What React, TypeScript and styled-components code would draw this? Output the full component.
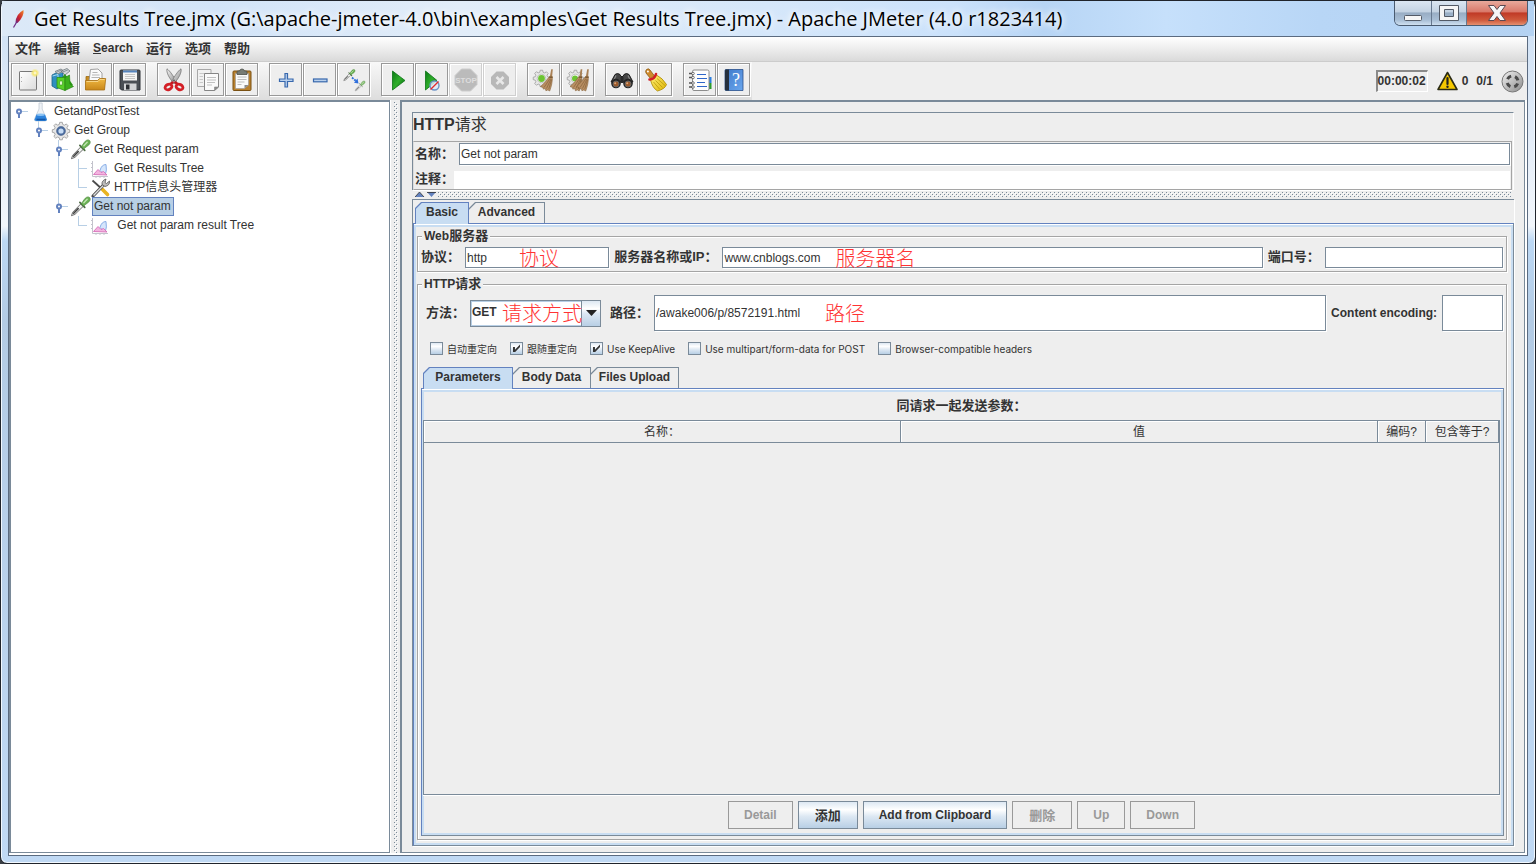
import React, { useState } from 'react';
import styled, { createGlobalStyle, css } from 'styled-components';

const c = {
  line: '#7a8a99',
  blueLine: '#6382bf',
  paleBlue: '#c8ddf2',
  face: '#eeeeee',
  grey: '#999999',
  text: '#333333',
  tree: '#b8cfe5',
  note: '#ff3333',
};

const GlobalStyle = createGlobalStyle`
  * { box-sizing: border-box; }
  body { margin: 0; background: #3a3f45; }
  body, button, input, select {
    font-family: "Liberation Sans", "Noto Sans CJK SC", sans-serif;
    font-size: 12px;
    color: ${c.text};
  }
`;

/* ---------- window frame ---------- */

const Frame = styled.div`
  min-height: 100vh;
  display: flex;
  flex-direction: column;
  padding: 0 7px 7px;
  border: 1px solid #20242b;
  border-radius: 7px;
  box-shadow: inset 0 0 0 1px #f2f8fe;
  background: linear-gradient(180deg, #b9cfe8 0, #d2e3f6 36px, #e4edf8 140px, #f2f6fb 225px, #bcd8f4 240px, #b3cbe4 320px, #c0d9f4 100%);
`;

const TitleBar = styled.header`
  display: flex;
  align-items: center;
  gap: 6px;
  height: 35px;
  margin: 0 -6px;
  padding: 0 6px 0 10px;
  background: linear-gradient(90deg, #dce9f7 0, #d2e4f8 14%, #e2edf9 30%, #d5e7fa 50%, #cbe2fb 62%, #b7d5f5 68%, #c6e0fb 76%, #b8d6f6 86%, #b4d2f2 100%);
`;

const Title = styled.h1`
  flex: 1;
  margin: 0;
  font: 400 20px/28px "Open Sans", "Noto Sans", sans-serif;
  color: #000;
  white-space: nowrap;
  text-shadow: 0 0 6px #fff, 0 0 10px #fff;
`;

const WindowControls = styled.div`
  display: flex;
  align-self: flex-start;
  height: 25px;
  border: 1px solid #4a5b70;
  border-top: 0;
  border-radius: 0 0 6px 6px;
  overflow: hidden;
`;

const ControlButton = styled.button<{ $w: number; $close?: boolean }>`
  width: ${p => p.$w}px;
  padding: 0;
  border: 0;
  border-left: 1px solid #66788f;
  display: flex;
  align-items: center;
  justify-content: center;
  background: ${p => p.$close
    ? 'linear-gradient(180deg, #e9a99b 0, #d9796a 45%, #c03a26 50%, #cf5a3c 80%, #e59070 100%)'
    : 'linear-gradient(180deg, #dbe6f2 0, #c3d2e2 45%, #98adc4 50%, #a9bfd6 80%, #cfe0f0 100%)'};
  &:first-child { border-left: 0; }
`;

const Client = styled.div`
  flex: 1;
  display: flex;
  flex-direction: column;
  border: 1px solid #5b6b80;
  background: ${c.face};
`;

/* ---------- menu and tool bar ---------- */

const MenuBar = styled.nav`
  display: flex;
  align-items: center;
  gap: 13px;
  height: 25px;
  padding: 0 6px 3px;
  background: linear-gradient(180deg, #ffffff 0, #dadada 100%);
  border-bottom: 1px solid #cccccc;
`;

const MenuItem = styled.button`
  padding: 0;
  border: 0;
  background: none;
  font-weight: 700;
  &:lang(zh) { font-size: 13px; }
`;

const ToolRow = styled.div`
  display: flex;
  align-items: center;
  justify-content: space-between;
  height: 38px;
`;

const ToolBar = styled.div`
  display: flex;
  gap: 11px;
  height: 38px;
  padding: 1px 2px 0;
  background: linear-gradient(180deg, #f8f8f8 0, #dddddd 100%);
`;

const ToolGroup = styled.div`
  display: flex;
  gap: 1px;
`;

const ToolButton = styled.button`
  width: 33px;
  height: 33px;
  padding: 0;
  display: flex;
  align-items: center;
  justify-content: center;
  border: 1px solid ${c.grey};
  background: ${c.face};
  box-shadow: 1px 1px 0 #fff, inset 1px 1px 0 #fff;
  &:disabled { border-color: #cfcfcf; }
`;

const Status = styled.div`
  display: flex;
  align-items: center;
  padding-right: 3px;
  font-weight: 700;
`;

const Clock = styled.output`
  height: 22px;
  padding: 0 1px 0 0;
  line-height: 19px;
  border: 1px solid #fff;
  border-top: 2px solid #8a8a8a;
  border-left: 2px solid #8a8a8a;
  margin-right: 9px;
`;

const Count = styled.span`
  margin: 0 8px 0 4px;
  & + & { margin-left: 0; }
`;

/* ---------- body split ---------- */

const Body = styled.div`
  flex: 1;
  display: grid;
  grid-template-columns: 382px 9px minmax(0, 1fr);
  padding: 0 2px 2px 0;
  background: #fff;
`;

const Pane = styled.section`
  border: 2px solid ${c.line};
  border-right-width: 1px;
  border-bottom-width: 1px;
`;

const TreePane = styled(Pane)`
  margin-right: 1px;
  background: #fff;
`;

const dots = css`
  background-color: ${c.face};
  background-image:
    conic-gradient(at 1px 1px, transparent 75%, ${c.line} 75%),
    conic-gradient(at 1px 1px, transparent 75%, ${c.line} 75%),
    conic-gradient(at 1px 1px, transparent 75%, #fff 75%),
    conic-gradient(at 1px 1px, transparent 75%, #fff 75%);
  background-size: 4px 4px;
  background-position: 0 0, 2px 2px, 1px 1px, 3px 3px;
`;

const VerticalDivider = styled.div`
  padding: 2px 2px 0 3px;
  background: ${c.face};
  &::before { content: ''; display: block; height: 100%; ${dots} }
`;

const EditorPane = styled(Pane)`
  display: flex;
  flex-direction: column;
  padding: 10px 10px 6px;
  background: ${c.face};
`;

/* ---------- tree ---------- */

const Tree = styled.ul`
  list-style: none;
  margin: 0;
  padding: 0;
`;

const TreeRow = styled.li`
  display: flex;
  height: 19px;
`;

const IconSlot = styled.span`
  width: 21px;
  height: 19px;
  svg { display: block; overflow: visible; }
`;

const NodeLabel = styled.button<{ $selected: boolean }>`
  height: 19px;
  padding: 0 2px 0 1px;
  line-height: 17px;
  white-space: pre;
  border: 1px solid ${p => (p.$selected ? c.blueLine : 'transparent')};
  background: ${p => (p.$selected ? c.tree : 'transparent')};
`;

/* ---------- editor ---------- */

const HeaderBox = styled.div`
  border-top: 1px solid ${c.line};
  border-left: 1px solid ${c.line};
  border-right: 1px solid #fff;
`;

const PageTitle = styled.h2`
  margin: 0;
  height: 28px;
  font-size: 16px;
  line-height: 24px;
  font-weight: 700;
  span { font-weight: 400; }
`;

const NameBox = styled.div`
  display: flex;
  flex-direction: column;
  gap: 5px;
  margin-right: 1px;
  padding: 1px 1px 0;
  border: 1px solid #a5a5a5;
  border-left-color: #dddddd;
  box-shadow: 0 1px 0 #fff;
`;

const FieldRow = styled.div<{ $gap: number }>`
  display: flex;
  align-items: center;
  gap: ${p => p.$gap}px;
`;

const Label = styled.label`
  font-weight: 700;
  white-space: nowrap;
  &:lang(zh) { font-size: 13px; line-height: 18px; padding-bottom: 1px; }
`;

const TextInput = styled.input<{ $h: number; $plain?: boolean }>`
  display: block;
  width: 100%;
  min-width: 0;
  height: ${p => p.$h}px;
  padding: 0 1px;
  border: ${p => (p.$plain ? '0' : `1px solid ${c.line}`)};
  border-radius: 0;
  background: #fff;
  outline: 0;
  box-shadow: ${p => (p.$plain ? 'none' : '1px 1px 0 #fff')};
`;

const Field = styled.div<{ $grow: number }>`
  position: relative;
  flex: ${p => p.$grow} 1 0;
  min-width: 0;
`;

const Note = styled.span<{ $left: number }>`
  position: absolute;
  top: 50%;
  left: ${p => p.$left}px;
  margin-top: -14px;
  font: 300 20px/28px "Noto Sans CJK SC", sans-serif;
  color: ${c.note};
  white-space: nowrap;
  pointer-events: none;
`;

const Splitter = styled.div`
  display: flex;
  align-items: center;
  gap: 1px;
  height: 9px;
  padding: 0 3px;
  &::after { content: ''; flex: 1; height: 5px; ${dots} }
`;

const TabbedBox = styled.div`
  flex: 1;
  display: flex;
  flex-direction: column;
  padding-top: 2px;
  border-top: 1px solid ${c.line};
  border-left: 1px solid ${c.line};
  box-shadow: 1px 1px 0 #fff;
`;

const Tabs = styled.div`
  display: flex;
  padding-left: 2px;
`;

const Tab = styled.button<{ $w: number; $active?: boolean }>`
  position: relative;
  width: ${p => p.$w}px;
  height: ${p => (p.$active ? 22 : 21)}px;
  margin-bottom: ${p => (p.$active ? -1 : 0)}px;
  padding: 0 0 ${p => (p.$active ? 3 : 2)}px;
  font-weight: 700;
  border: 1px solid ${p => (p.$active ? c.blueLine : c.line)};
  border-bottom: 0;
  border-left-width: ${p => (p.$active ? 1 : 0)}px;
  background: ${p => css`linear-gradient(135deg, ${p.$active ? c.blueLine : c.line} 5px, ${p.$active ? c.paleBlue : c.face} 6px)`} border-box;
  clip-path: polygon(6px 0, 100% 0, 100% 100%, 0 100%, 0 6px);
  z-index: ${p => (p.$active ? 1 : 0)};
`;

const TabPage = styled.div<{ $pad: string }>`
  flex: 1;
  display: flex;
  flex-direction: column;
  padding: ${p => p.$pad};
  border: 1px solid ${c.blueLine};
  border-right-color: ${c.line};
  border-bottom-color: ${c.line};
  box-shadow: inset 0 1px 0 #fff, inset 0 3px 0 ${c.paleBlue}, inset 0 0 0 2px ${c.paleBlue};
`;

const Group = styled.fieldset<{ $fill?: boolean }>`
  ${p => p.$fill && css`flex: 1; display: flex; flex-direction: column;`}
  min-width: 0;
  margin: 0;
  padding: 3px 2px 3px 3px;
  border: 1px solid #a5a5a5;
  box-shadow: 1px 1px 0 #fff, inset 1px 1px 0 #fff;
  & + & { margin-top: 4px; }
  > ${FieldRow} { padding-right: 1px; }
`;

const Legend = styled.legend`
  margin-left: 1px;
  padding: 0 2px;
  height: 16px;
  font-weight: 700;
  line-height: 16px;
  background: ${c.face};
  span { font-size: 13px; }
`;

const Combo = styled.div`
  position: relative;
  width: 131px;
  margin-right: 4px;
`;

const Select = styled.select`
  appearance: none;
  display: block;
  width: 100%;
  height: 27px;
  padding: 0 22px 2px 1px;
  font-weight: 700;
  border: 1px solid ${c.line};
  border-radius: 0;
  background: #fff;
  box-shadow: inset 0 0 0 1px ${c.tree};
`;

const ComboArrow = styled.span`
  position: absolute;
  top: 0;
  right: 0;
  bottom: 0;
  width: 20px;
  display: flex;
  align-items: center;
  justify-content: center;
  border: 1px solid ${c.line};
  background: linear-gradient(180deg, #dde8f3 0, #ffffff 30%, #dde8f3 50%, #b8cfe5 100%);
  pointer-events: none;
`;

const CheckRow = styled.div`
  display: flex;
  align-items: center;
  gap: 13px;
  height: 36px;
  padding: 0 0 1px 9px;
`;

const CheckLabel = styled.label`
  display: flex;
  align-items: center;
  gap: 4px;
  font: 400 10px/14px Inter, "Noto Sans CJK SC", sans-serif;
  white-space: nowrap;
`;

const CheckInput = styled.input`
  appearance: none;
  width: 13px;
  height: 13px;
  margin: 0;
  border: 1px solid ${c.line};
  background: linear-gradient(180deg, #dde8f3 0, #ffffff 30%, #dde8f3 60%, #b8cfe5 100%);
  &:checked::before {
    content: '';
    display: block;
    width: 11px;
    height: 11px;
    background: ${c.text};
    clip-path: polygon(18% 36%, 36% 36%, 36% 62%, 82% 14%, 82% 36%, 38% 82%, 18% 82%);
  }
`;

const TableCaption = styled.h3`
  margin: 0;
  height: 28px;
  font-size: 13px;
  line-height: 28px;
  text-align: center;
`;

const TableArea = styled.div`
  flex: 1;
  border: 1px solid ${c.line};
  box-shadow: 0 1px 0 #fff;
`;

const ParamTable = styled.table`
  width: 100%;
  table-layout: fixed;
  border-collapse: separate;
  border-spacing: 0;
`;

const HeadCell = styled.th<{ $w?: number }>`
  ${p => p.$w && css`width: ${p.$w}px;`}
  height: 22px;
  padding: 0;
  font-size: 12px;
  font-weight: 400;
  line-height: 20px;
  white-space: nowrap;
  border-right: 1px solid ${c.line};
  border-bottom: 1px solid ${c.line};
  box-shadow: inset 1px 1px 0 #fff;
`;

const ButtonBar = styled.div`
  display: flex;
  justify-content: center;
  gap: 5px;
  padding: 6px 0 4px;
`;

const PushButton = styled.button`
  height: 28px;
  padding: 0 15px 1px;
  font-weight: 700;
  border: 1px solid ${c.line};
  background: linear-gradient(180deg, #dde8f3 0, #ffffff 30%, #dde8f3 55%, #b8cfe5 100%);
  &:lang(zh) { font-size: 13px; padding: 0 16px 2px; }
  &:disabled { color: ${c.grey}; border-color: ${c.grey}; background: ${c.face}; }
`;

/* ---------- drawings ---------- */

const Defs = () => (
  <svg width="0" height="0" style={{ position: 'absolute' }} aria-hidden="true">
    <defs>
      <linearGradient id="paper" x1="0" y1="0" x2="1" y2="1"><stop offset="0" stopColor="#fff" /><stop offset="1" stopColor="#dcdcdc" /></linearGradient>
      <linearGradient id="green" x1="0" y1="0" x2="1" y2="1"><stop offset="0" stopColor="#0b7a16" /><stop offset=".5" stopColor="#2fae2b" /><stop offset="1" stopColor="#04600c" /></linearGradient>
      <linearGradient id="gold" x1="0" y1="0" x2="0" y2="1"><stop offset="0" stopColor="#f0b943" /><stop offset="1" stopColor="#c8871a" /></linearGradient>
      <linearGradient id="yellow" x1="0" y1="0" x2="1" y2="1"><stop offset="0" stopColor="#fff27a" /><stop offset="1" stopColor="#e0b400" /></linearGradient>
      <linearGradient id="steel" x1="0" y1="0" x2="1" y2="1"><stop offset="0" stopColor="#f4f4f4" /><stop offset="1" stopColor="#8a8a8a" /></linearGradient>
      <linearGradient id="book" x1="0" y1="0" x2="1" y2="1"><stop offset="0" stopColor="#3f78c9" /><stop offset="1" stopColor="#6aa7ee" /></linearGradient>
      <radialGradient id="glow"><stop offset="0" stopColor="#fffef0" /><stop offset=".45" stopColor="#f6e770" /><stop offset="1" stopColor="#f6e770" stopOpacity="0" /></radialGradient>
      <linearGradient id="feather" x1="0" y1="1" x2="1" y2="0"><stop offset="0" stopColor="#6b2a83" /><stop offset=".4" stopColor="#c8202f" /><stop offset="1" stopColor="#f08a2a" /></linearGradient>
    </defs>
  </svg>
);

const Svg = ({ children, size = 24 }: { children: React.ReactNode; size?: number }) => (
  <svg width={size} height={size} viewBox="0 0 24 24" fill="none" aria-hidden="true">{children}</svg>
);

const Dropper = () => (
  <>
    <path d="M1.500 22.500 3 18.500 12.200 9l2.800 2.800L5.500 21z" fill="#f2f4f2" stroke="#5c5c5c" strokeWidth="1" />
    <path d="M3.500 20.200 9.800 13.800" stroke="#3f3f3f" strokeWidth="1.800" />
    <path d="M11.200 7.200 16.800 12.800" stroke="#4d6a44" strokeWidth="2" strokeLinecap="round" />
    <path d="M12.600 8.600c1.600-1.200 2.600-4 4.800-6.200 1.800-1.800 3.900-1.900 5-.8 1.100 1.200 1 3.200-.8 5-2 2-4.800 3.200-6 4.900z" fill="#6ab153" stroke="#437f33" strokeWidth=".7" />
    <path d="M15.800 7.600 19.600 3.600" stroke="#c2e6b2" strokeWidth="1.500" strokeLinecap="round" />
  </>
);

const GearShape = () => (
  <>
    <path d="M10 1.500h3l.5 2.500 1.900.8 2.200-1.400 2.100 2.100-1.400 2.200.8 1.900 2.400.5v3l-2.400.5-.8 1.900 1.400 2.200-2.100 2.100-2.200-1.400-1.900.8-.5 2.400h-3l-.5-2.400-1.900-.8-2.200 1.400-2.100-2.100 1.400-2.200-.8-1.900L1.500 13v-3l2.400-.5.8-1.900-1.400-2.200 2.100-2.100 2.200 1.400L9.500 4z" fill="#e6e6e6" stroke="#9d9d9d" />
    <circle cx="11.500" cy="11.500" r="5.200" fill="#f8f8f8" stroke="#b5b5b5" />
  </>
);

const Bristles = ({ x }: { x: number }) => (
  <g transform={`translate(${x} 0)`}>
    <path d="M18.200 1.200h1.600L19 10h-2.400z" fill="#a98156" />
    <path d="M16.400 8.500C14 11.500 11.500 15.500 7.500 18.500l2.500 1 .3 1.600 2-.6.6 2.200 2-.8 1.800 1.100c1.700-4.500 2.900-9.500 2.600-14.500z" fill="#b98f63" stroke="#86633b" strokeWidth=".6" />
    <path d="M17 10.500 11 19.500M18 11 13.500 20.500M18.600 11.500 15.800 21" stroke="#86633b" strokeWidth=".7" />
    <path d="M16.200 9.300h3.400" stroke="#6f4f2a" />
  </g>
);

const icons = {
  new: (
    <Svg>
      <rect x="3.500" y="3.500" width="17" height="18.500" rx=".6" fill="url(#paper)" stroke="#777" />
      <path d="M5.500 9v1M5.500 13v1" stroke="#aaa" />
      <circle cx="19" cy="5" r="4.500" fill="url(#glow)" />
    </Svg>
  ),
  templates: (
    <Svg>
      <path d="M2 7 10 3l3 2v12l-6 4-5-3z" fill="#2f8fc0" stroke="#1d6287" strokeWidth=".8" />
      <path d="M5 3.500 11 1l2 1.500L8 6zM11 3l6-2.500L20 3l-5 4z" fill="#cfd5d8" stroke="#70797d" strokeWidth=".8" />
      <path d="M6 4.500 11 2.200M13 4l5-2.200M9 5.500l5-2" stroke="#8d979c" />
      <path d="M2.500 8 8 6.500v12" stroke="#a8dcf3" />
      <path d="M12 9.500 15 6l8 11-8 5z" fill="#2b9a18" />
      <path d="M7 9.500h8V22.500l-8-3z" fill="#59d02a" stroke="#2f8f17" strokeWidth=".8" />
      <path d="M15 9.500 19.500 7l.5 9 3.500 2.500-8.500 4z" fill="#3bb01d" stroke="#23780f" strokeWidth=".6" />
      <rect x="9.500" y="13" width="3" height="4" rx=".8" fill="#dff8cf" stroke="#2f8f17" strokeWidth=".6" />
    </Svg>
  ),
  open: (
    <Svg>
      <path d="M2 8.500h6l1 2h11v11H2z" fill="#c98d22" stroke="#9b6b13" strokeWidth=".8" />
      <path d="M5 13 6.500 1.500 14 1l4 4L18 13z" fill="#fafafa" stroke="#8b8b8b" strokeWidth=".8" />
      <path d="M8.500 4.500h5M8 7h7.500M7.500 9.500h8.500" stroke="#b5b5b5" />
      <path d="M1.500 22V12.500h12l2-2h6.200L20.500 22z" fill="url(#gold)" stroke="#a87118" strokeWidth=".8" />
      <path d="M2.500 13.500h11.500l2-2h4.500" stroke="#fbe09a" strokeWidth=".8" />
    </Svg>
  ),
  save: (
    <Svg>
      <path d="M2 3q0-1 1-1h18q1 0 1 1v19H3.500L2 20.500z" fill="#4a4f55" stroke="#2f3338" />
      <rect x="5" y="2.500" width="14" height="10" fill="#f4f4f4" />
      <rect x="5" y="2.500" width="14" height="2" fill="#5584bd" />
      <path d="M7 6.500h10M7 8.500h10M7 10.500h10" stroke="#c4c4c4" />
      <rect x="6" y="15.500" width="12.500" height="6.500" fill="#d2d4d6" />
      <rect x="8" y="16.500" width="3.500" height="5" fill="#2b2e33" />
    </Svg>
  ),
  cut: (
    <Svg>
      <path d="M5 .8C4 4 7.500 11.500 12.500 15.500l1.800-1.800C11.500 8 8 3 5 .8z" fill="url(#steel)" stroke="#777" strokeWidth=".8" />
      <path d="M19 .8c1 3.200-2.500 10.700-7.500 14.700l-1.800-1.800C12.500 8 16 3 19 .8z" fill="url(#steel)" stroke="#777" strokeWidth=".8" />
      <circle cx="12" cy="12.500" r=".9" fill="#555" />
      <path d="M10.500 14.500 8.500 16M13.500 14.500l2 1.500" stroke="#c3161c" strokeWidth="2.600" strokeLinecap="round" />
      <ellipse cx="6.500" cy="19" rx="3.600" ry="2.600" stroke="#d31f26" strokeWidth="2.800" transform="rotate(-25 6.500 19)" />
      <ellipse cx="17.500" cy="19" rx="3.600" ry="2.600" stroke="#d31f26" strokeWidth="2.800" transform="rotate(25 17.500 19)" />
    </Svg>
  ),
  copy: (
    <Svg>
      <path d="M1.500 1.500H15v17H1.500z" fill="#f1f1f1" stroke="#a8a8a8" />
      <path d="M3.500 5.500H9M3.500 8.500H7M3.500 11.500H7M3.500 14.500H7" stroke="#c9c9c9" />
      <path d="M8.500 5.500h14V19l-4 3.500h-10z" fill="#fafafa" stroke="#858585" />
      <path d="M11 9.500h9M11 12h9M11 14.500h8M11 17h5" stroke="#c0c0c0" />
      <path d="M22.500 19h-4v3.500z" fill="#8a8a8a" stroke="#858585" strokeWidth=".6" />
    </Svg>
  ),
  paste: (
    <Svg>
      <rect x="3" y="3" width="18" height="19.500" rx="1" fill="#b9812f" stroke="#7a5113" />
      <path d="M5.500 5.500h13V17l-4 3.500h-9z" fill="#fafafa" stroke="#9a9a9a" strokeWidth=".6" />
      <path d="M7.500 9h9M7.500 11.500h9M7.500 14h7M7.500 16.500h4" stroke="#bcbcbc" />
      <path d="M18.500 17h-4v3.500z" fill="#8a8a8a" />
      <path d="M7 6.500V4q0-1 1-1h1.500Q10 1 12 1t2.500 2H16q1 0 1 1v2.500z" fill="#777b74" stroke="#4c4f49" strokeWidth=".8" />
    </Svg>
  ),
  plus: (
    <Svg><path d="M11 5.500h2.500V11H19v2.500h-5.500V19H11v-5.500H5.500V11H11z" fill="#b9d0ec" stroke="#3868ad" strokeWidth="1.200" /></Svg>
  ),
  minus: (
    <Svg><rect x="5.500" y="11" width="13.500" height="2.800" fill="#b9d0ec" stroke="#3868ad" strokeWidth="1.200" /></Svg>
  ),
  toggle: (
    <Svg>
      <g transform="translate(1 1) scale(.52)"><Dropper /></g>
      <g transform="translate(12.500 12.500) scale(.46)" opacity=".8"><Dropper /></g>
      <path d="M10 9.500 14 13" stroke="#2f6fdc" strokeWidth="1.800" strokeDasharray="2 1" />
      <path d="M12 14.800 16.500 15.500 15.500 10.500z" fill="#2f6fdc" />
    </Svg>
  ),
  start: (
    <Svg><path d="M6.500 3 19 12.500 6.500 22z" fill="url(#green)" stroke="#0a7314" strokeWidth=".8" /></Svg>
  ),
  startNoPause: (
    <Svg>
      <path d="M5.500 3 17 12.500 5.500 22z" fill="url(#green)" stroke="#0a7314" strokeWidth=".8" />
      <circle cx="14.500" cy="17.500" r="4.500" fill="#dfe9f7" fillOpacity=".85" stroke="#6d93c6" strokeWidth="1.400" />
      <path d="m10.500 21.500 8-8" stroke="#e22b2b" strokeWidth="1.300" />
    </Svg>
  ),
  stop: (
    <Svg>
      <path d="M7.500 1h9L23 7.500v9L16.500 23h-9L1 16.500v-9z" fill="#bbbbbb" stroke="#cccccc" />
      <text x="12" y="15" textAnchor="middle" fontSize="8" fontWeight="700" fill="#dedede" fontFamily="Liberation Sans">STOP</text>
    </Svg>
  ),
  shutdown: (
    <Svg>
      <path d="M8.500 3.500h7L21 9v7l-5.500 5.500h-7L3 16V9z" fill="#b8b8b8" />
      <path d="m8.500 9 7 7m0-7-7 7" stroke="#e8e8e8" strokeWidth="2.600" />
    </Svg>
  ),
  clear: (
    <Svg>
      <g transform="translate(0 1) scale(.82)"><GearShape /></g>
      <circle cx="9.500" cy="10.500" r="3.400" fill="#6cc433" />
      <Bristles x={1} />
    </Svg>
  ),
  clearAll: (
    <Svg>
      <g transform="translate(0 1) scale(.82)"><GearShape /></g>
      <circle cx="9" cy="10.500" r="3" fill="#6cc433" />
      <Bristles x={-3.5} />
      <Bristles x={3} />
    </Svg>
  ),
  search: (
    <Svg>
      <path d="M5 6.500q2.500-2 5 0l1 2h2l1-2q2.500-2 5 0L23 14H1z" fill="#454545" stroke="#1e1e1e" />
      <path d="M6 7.500 3.500 13M18 7.500l2.500 5.500" stroke="#8a8a8a" strokeWidth="1.200" />
      <rect x="10.500" y="9" width="3" height="6" fill="#2a2a2a" />
      <circle cx="6" cy="15.500" r="4.800" fill="#242424" />
      <circle cx="18" cy="15.500" r="4.800" fill="#242424" />
      <circle cx="6" cy="16" r="3" fill="#9b5a2c" stroke="#666" />
      <circle cx="18" cy="16" r="3" fill="#9b5a2c" stroke="#666" />
      <circle cx="5.200" cy="15.200" r="1" fill="#dca678" />
      <circle cx="17.200" cy="15.200" r="1" fill="#dca678" />
    </Svg>
  ),
  broom: (
    <Svg>
      <path d="M2.500 1.500q2-1.500 3.500.5l4.500 6-4 2.500L2 5q-1-2 .5-3.500z" fill="#cf8a2b" stroke="#8d5a12" strokeWidth=".8" />
      <circle cx="3.900" cy="3.500" r="1" fill="#fff" />
      <path d="M6.500 12q4.500-.5 6-5 6 3 10 9.500-1.500 4.500-9 6.500-5-3-7-11z" fill="url(#yellow)" stroke="#a98600" strokeWidth=".8" />
      <path d="m9.500 14 6 7M11.500 12.500l7 7M13 10.500l8 7" stroke="#b99a10" strokeWidth=".8" />
      <path d="M5.500 11.500q5 0 6.500-5.500" stroke="#d31f26" strokeWidth="2.600" strokeLinecap="round" />
    </Svg>
  ),
  list: (
    <Svg>
      <path d="M20 9h3.500v6H20z" fill="#2b7fe0" /><path d="M20 15h3.500v6H20z" fill="#2c9c2c" />
      <rect x="4.500" y="2" width="16.500" height="20.500" rx="1.500" fill="#fdfdfd" stroke="#8c8c8c" />
      <path d="M9 6.500h9M9 10.500h10M9 14.500h8M9 18.500h10" stroke="#2f66c9" strokeWidth="1.200" />
      <circle cx="5" cy="5.500" r="1.300" fill="#fff" stroke="#555" strokeWidth=".8" />
      <circle cx="5" cy="9.500" r="1.300" fill="#fff" stroke="#555" strokeWidth=".8" />
      <circle cx="5" cy="15" r="1.300" fill="#fff" stroke="#555" strokeWidth=".8" />
      <circle cx="5" cy="19" r="1.300" fill="#fff" stroke="#555" strokeWidth=".8" />
      <path d="M1 5.500h3M1 9.500h3M1 15h3M1 19h3" stroke="#555" strokeWidth="1.400" />
    </Svg>
  ),
  help: (
    <Svg>
      <path d="M3 2.500Q3 1.500 4 1.500h17v21H4q-1 0-1-1z" fill="url(#book)" stroke="#284f8c" strokeWidth=".8" />
      <path d="M3 2.500Q3 1.500 4 1.500h3v21H4q-1 0-1-1z" fill="#26303d" />
      <text x="14" y="18" textAnchor="middle" fontSize="18" fill="#fff" fontFamily="Liberation Serif">?</text>
    </Svg>
  ),
};

const treeIcons: Record<string, React.ReactNode> = {
  flask: (
    <svg width="20" height="20" viewBox="0 0 20 20" fill="none">
      <path d="M8 1h3.200v6l4.300 10q.5 2-1.500 2H5q-2 0-1.500-2L8 7z" fill="#eef2f6" stroke="#c3ccd6" strokeWidth=".8" />
      <path d="M5.500 12.500H14l1.800 4.800q.3 1.700-1.500 1.700H5.200q-2 0-1.500-1.700z" fill="#2f84dc" />
      <ellipse cx="9.700" cy="12.700" rx="4" ry="1.200" fill="#8cc3f4" />
      <path d="M5.500 17.500h9" stroke="#1357a8" strokeWidth="1.600" />
    </svg>
  ),
  gear: (
    <svg width="20" height="20" viewBox="0 0 23 23" fill="none">
      <GearShape />
      <circle cx="11.500" cy="11.500" r="4.200" fill="#c6dcf5" stroke="#4a6a9c" strokeWidth="2.400" />
    </svg>
  ),
  dropper: <svg width="20" height="20" viewBox="1 1 23 23" fill="none"><Dropper /></svg>,
  chart: (
    <svg width="20" height="20" viewBox="0 0 20 20" fill="none">
      <path d="M1.500 2v15.500H17" stroke="#c3c3cc" />
      <path d="M0 4.500h1.500M0 8.500h1.500M0 12.500h1.500M5 17.500V19M9 17.500V19M13 17.500V19" stroke="#c3c3cc" />
      <path d="M9 11.500q1.500-6 6-6 1 6-.500 9.500-3 0-5.500-3.500z" fill="#d5e6fc" stroke="#7fa6e3" strokeWidth=".9" />
      <path d="M2.500 15.500 7 10.500l3 3 2.500-1 3.500 3.500z" fill="#f3b4e0" stroke="#d66fb8" strokeWidth=".9" />
    </svg>
  ),
  tools: (
    <svg width="20" height="20" viewBox="0 0 20 20" fill="none">
      <path d="M1.500 2.500 11 11" stroke="#4b4b4b" strokeWidth="1.800" />
      <path d="m11.500 11.500 5 5" stroke="#e8b321" strokeWidth="3.600" strokeLinecap="round" />
      <path d="M2 18 13 6.500" stroke="#4b4b4b" strokeWidth="3.200" strokeLinecap="round" />
      <path d="M2.500 17.500 13 6.800" stroke="#dddddd" strokeWidth="1.400" />
      <path d="M11 6.500q-.5-4 4-5.500l-1 3.500 1.500 1L18.500 3q.5 4.500-4.500 5.500z" fill="#bcbcbc" stroke="#555" strokeWidth=".8" />
    </svg>
  ),
};

/* ---------- data ---------- */

type TreeItem = {
  text: string;
  depth: number;
  icon: string;
  handle?: boolean;
  full?: number[];
  half?: number[];
};

const tree: TreeItem[] = [
  { text: 'GetandPostTest', depth: 0, icon: 'flask', handle: true },
  { text: 'Get Group', depth: 1, icon: 'gear', handle: true, half: [27] },
  { text: 'Get Request param', depth: 2, icon: 'dropper', handle: true, full: [47] },
  { text: 'Get Results Tree', depth: 3, icon: 'chart', full: [47, 67] },
  { text: 'HTTP信息头管理器', depth: 3, icon: 'tools', full: [47], half: [67] },
  { text: 'Get not param', depth: 2, icon: 'dropper', handle: true, half: [47] },
  { text: ' Get not param result Tree', depth: 3, icon: 'chart', half: [67] },
];

type ToolDef = { name: keyof typeof icons; label: string; off?: boolean };

const toolGroups: ToolDef[][] = [
  [{ name: 'new', label: 'New' }, { name: 'templates', label: 'Templates' }, { name: 'open', label: 'Open' }, { name: 'save', label: 'Save' }],
  [{ name: 'cut', label: 'Cut' }, { name: 'copy', label: 'Copy' }, { name: 'paste', label: 'Paste' }],
  [{ name: 'plus', label: 'Expand All' }, { name: 'minus', label: 'Collapse All' }, { name: 'toggle', label: 'Toggle' }],
  [{ name: 'start', label: 'Start' }, { name: 'startNoPause', label: 'Start no pauses' }, { name: 'stop', label: 'Stop', off: true }, { name: 'shutdown', label: 'Shutdown', off: true }],
  [{ name: 'clear', label: 'Clear' }, { name: 'clearAll', label: 'Clear All' }],
  [{ name: 'search', label: 'Search' }, { name: 'broom', label: 'Reset Search' }],
  [{ name: 'list', label: 'Function Helper' }, { name: 'help', label: 'Help' }],
];

const checks = [
  { id: 'auto', text: '自动重定向', on: false },
  { id: 'follow', text: '跟随重定向', on: true },
  { id: 'keep', text: 'Use KeepAlive', on: true },
  { id: 'multi', text: 'Use multipart/form-data for POST', on: false },
  { id: 'compat', text: 'Browser-compatible headers', on: false },
];

const actions = [
  { text: 'Detail', off: true },
  { text: '添加', zh: true },
  { text: 'Add from Clipboard' },
  { text: '删除', zh: true, off: true },
  { text: 'Up', off: true },
  { text: 'Down', off: true },
];

const Guides = ({ item }: { item: TreeItem }) => {
  const w = 20 + item.depth * 20;
  const hx = w - 12;
  return (
    <svg width={w} height="19" fill="none" aria-hidden="true">
      {item.full?.map(x => <path key={x} d={`M${x + 0.5} 0V19`} stroke={c.tree} />)}
      {item.half?.map(x => <path key={x} d={`M${x + 0.5} 0V9`} stroke={c.tree} />)}
      {item.handle ? (
        <>
          <path d={`M${hx + 2} 9.500h7`} stroke={c.tree} />
          <circle cx={hx} cy="9.500" r="2" fill="#fff" stroke={c.blueLine} strokeWidth="2" />
          <path d={`M${hx} 12v4`} stroke={c.blueLine} strokeWidth="2" />
        </>
      ) : (
        <path d={`M${w - 13} 9.500h9`} stroke={c.tree} />
      )}
    </svg>
  );
};

export default function App() {
  const [selected, setSelected] = useState(5);
  return (
    <Frame>
      <GlobalStyle />
      <Defs />
      <TitleBar>
        <svg width="16" height="20" viewBox="0 0 16 20" fill="none" aria-hidden="true">
          <path d="M3.500 13.500Q4 5 11.500 1q1 6-6 13z" fill="url(#feather)" />
          <path d="M1.500 18.500 5 12.500" stroke="#6b2a83" strokeWidth="1.200" />
        </svg>
        <Title>Get Results Tree.jmx (G:\apache-jmeter-4.0\bin\examples\Get Results Tree.jmx) - Apache JMeter (4.0 r1823414)</Title>
        <WindowControls>
          <ControlButton $w={36} aria-label="Minimize">
            <svg width="20" height="20" viewBox="0 0 20 20"><rect x="1.500" y="12.500" width="17" height="5" rx="1" fill="#f6f6f6" stroke="#535a66" /></svg>
          </ControlButton>
          <ControlButton $w={35} aria-label="Maximize">
            <svg width="20" height="20" viewBox="0 0 20 20"><path d="M.5 2.500h19v15H.500zM5.500 6.500v7h9v-7z" fillRule="evenodd" fill="#f6f6f6" stroke="#535a66" /></svg>
          </ControlButton>
          <ControlButton $w={61} $close aria-label="Close">
            <svg width="20" height="20" viewBox="0 0 20 20"><path d="M1.500 2.500h5.500L10 6.500l3-4h5.500L13 10l5.500 7.500H13l-3-4-3 4H1.500L7 10z" fill="#f6f6f6" stroke="#5b4a52" /></svg>
          </ControlButton>
        </WindowControls>
      </TitleBar>

      <Client>
        <MenuBar>
          <MenuItem lang="zh">文件</MenuItem>
          <MenuItem lang="zh">编辑</MenuItem>
          <MenuItem><u>S</u>earch</MenuItem>
          <MenuItem lang="zh">运行</MenuItem>
          <MenuItem lang="zh">选项</MenuItem>
          <MenuItem lang="zh">帮助</MenuItem>
        </MenuBar>
        <ToolRow>
          <ToolBar role="toolbar">
            {toolGroups.map((group, i) => (
              <ToolGroup key={i}>
                {group.map(t => (
                  <ToolButton key={t.name} aria-label={t.label} disabled={t.off}>{icons[t.name]}</ToolButton>
                ))}
              </ToolGroup>
            ))}
          </ToolBar>
          <Status>
            <Clock>00:00:02</Clock>
            <svg width="21" height="20" viewBox="0 0 21 20" fill="none" aria-hidden="true">
              <path d="M10.500 1.500 20 18.500H1z" fill="#f5c800" stroke="#2b2b14" strokeWidth="1.600" strokeLinejoin="round" />
              <path d="M10.500 7v6" stroke="#222" strokeWidth="2.200" strokeLinecap="round" />
              <circle cx="10.500" cy="15.800" r="1.200" fill="#222" />
            </svg>
            <Count>0</Count>
            <Count>0/1</Count>
            <svg width="23" height="23" viewBox="0 0 23 23" fill="none" aria-hidden="true">
              <circle cx="11.500" cy="11.500" r="10.500" fill="url(#steel)" stroke="#777" />
              <circle cx="11.500" cy="11.500" r="5.500" stroke="#4a4a4a" strokeWidth="3" strokeDasharray="4.600 4.040" strokeDashoffset="-2" />
            </svg>
          </Status>
        </ToolRow>

        <Body>
          <TreePane>
            <Tree>
              {tree.map((item, i) => (
                <TreeRow key={i}>
                  <Guides item={item} />
                  <IconSlot>{treeIcons[item.icon]}</IconSlot>
                  <NodeLabel $selected={i === selected} onClick={() => setSelected(i)}>{item.text}</NodeLabel>
                </TreeRow>
              ))}
            </Tree>
          </TreePane>
          <VerticalDivider />
          <EditorPane>
            <HeaderBox>
              <PageTitle>HTTP<span>请求</span></PageTitle>
              <NameBox>
                <FieldRow $gap={5}>
                  <Label lang="zh" htmlFor="name">名称：</Label>
                  <TextInput id="name" $h={22} defaultValue="Get not param" />
                </FieldRow>
                <FieldRow $gap={0}>
                  <Label lang="zh" htmlFor="comment">注释：</Label>
                  <TextInput id="comment" $h={18} $plain />
                </FieldRow>
              </NameBox>
            </HeaderBox>
            <Splitter>
              <svg width="22" height="6" viewBox="0 0 22 6" aria-hidden="true">
                <path d="M0 5 4.500 0 9 5zM12 0h9l-4.500 5z" fill={c.blueLine} />
                <path d="m0 5 4.500-5L9 5M12 .500h9" fill="none" stroke="#333" strokeWidth=".8" />
              </svg>
            </Splitter>
            <TabbedBox>
              <Tabs role="tablist">
                <Tab role="tab" $w={54} $active>Basic</Tab>
                <Tab role="tab" $w={76}>Advanced</Tab>
              </Tabs>
              <TabPage $pad="4px 6px 5px 3px">
                <Group>
                  <Legend>Web<span>服务器</span></Legend>
                  <FieldRow $gap={5}>
                    <Label lang="zh" htmlFor="protocol">协议：</Label>
                    <Field $grow={144}>
                      <TextInput id="protocol" $h={21} defaultValue="http" />
                      <Note $left={54}>协议</Note>
                    </Field>
                    <Label lang="zh" htmlFor="server">服务器名称或IP：</Label>
                    <Field $grow={540}>
                      <TextInput id="server" $h={21} defaultValue="www.cnblogs.com" />
                      <Note $left={113}>服务器名</Note>
                    </Field>
                    <Label lang="zh" htmlFor="port">端口号：</Label>
                    <Field $grow={178}>
                      <TextInput id="port" $h={21} />
                    </Field>
                  </FieldRow>
                </Group>
                <Group $fill>
                  <Legend>HTTP<span>请求</span></Legend>
                  <FieldRow $gap={5}>
                    <span />
                    <Label lang="zh" htmlFor="method">方法：</Label>
                    <Combo>
                      <Select id="method" defaultValue="GET"><option>GET</option><option>POST</option></Select>
                      <ComboArrow><svg width="11" height="6" viewBox="0 0 11 6"><path d="M0 0h11L5.500 6z" fill="#222" /></svg></ComboArrow>
                      <Note $left={32}>请求方式</Note>
                    </Combo>
                    <Label lang="zh" htmlFor="path">路径：</Label>
                    <Field $grow={673}>
                      <TextInput id="path" $h={36} defaultValue="/awake006/p/8572191.html" />
                      <Note $left={171}>路径</Note>
                    </Field>
                    <Label htmlFor="encoding">Content encoding:</Label>
                    <Field $grow={61}>
                      <TextInput id="encoding" $h={36} />
                    </Field>
                  </FieldRow>
                  <CheckRow>
                    {checks.map(k => (
                      <CheckLabel key={k.id} htmlFor={k.id}>
                        <CheckInput type="checkbox" id={k.id} defaultChecked={k.on} />
                        {k.text}
                      </CheckLabel>
                    ))}
                  </CheckRow>
                  <Tabs role="tablist">
                    <Tab role="tab" $w={90} $active>Parameters</Tab>
                    <Tab role="tab" $w={78}>Body Data</Tab>
                    <Tab role="tab" $w={88}>Files Upload</Tab>
                  </Tabs>
                  <TabPage $pad="3px 3px 2px 1px">
                    <TableCaption>同请求一起发送参数：</TableCaption>
                    <TableArea>
                      <ParamTable>
                        <thead>
                          <tr>
                            <HeadCell>名称：</HeadCell>
                            <HeadCell>值</HeadCell>
                            <HeadCell $w={48}>编码?</HeadCell>
                            <HeadCell $w={73}>包含等于?</HeadCell>
                          </tr>
                        </thead>
                        <tbody />
                      </ParamTable>
                    </TableArea>
                    <ButtonBar>
                      {actions.map(a => (
                        <PushButton key={a.text} lang={a.zh ? 'zh' : undefined} disabled={a.off}>{a.text}</PushButton>
                      ))}
                    </ButtonBar>
                  </TabPage>
                </Group>
              </TabPage>
            </TabbedBox>
          </EditorPane>
        </Body>
      </Client>
    </Frame>
  );
}
